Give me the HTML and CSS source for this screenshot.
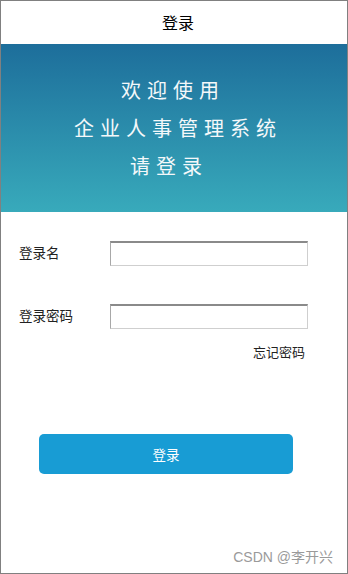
FILE: index.html
```html
<!DOCTYPE html>
<html lang="zh">
<head>
<meta charset="utf-8">
<title>登录</title>
<link rel="stylesheet" href="styles.css">
</head>
<body>
<div class="frame">
  <div class="header">登录</div>
  <div class="banner">
    <div class="line line-welcome">欢迎使用</div>
    <div class="line line-title">企业人事管理系统</div>
    <div class="line line-login">请登录</div>
  </div>
  <div class="form">
    <div class="row">
      <label class="label">登录名</label>
      <input class="input" type="text">
    </div>
    <div class="row row2">
      <label class="label">登录密码</label>
      <input class="input" type="password">
    </div>
    <div class="forget">忘记密码</div>
    <div class="btn-wrap"><button class="btn">登录</button></div>
  </div>
  <div class="watermark">CSDN @李开兴</div>
</div>
</body>
</html>
```

FILE: styles.css
```css
html, body {
  margin: 0;
  padding: 0;
  background: #fff;
}
body {
  font-family: "Liberation Sans", "Noto Sans CJK SC", sans-serif;
  color: #111;
}
.frame {
  width: 348px;
  height: 574px;
  box-sizing: border-box;
  border: 1px solid #808080;
  display: flex;
  flex-direction: column;
  overflow: hidden;
}
.header {
  height: 43px;
  line-height: 46px;
  text-align: center;
  padding-left: 8px;
  font-size: 16px;
  color: #000;
}
.banner {
  margin: 0 -1px;
  height: 168px;
  box-sizing: border-box;
  padding-top: 28px;
  background: linear-gradient(to bottom, #1d6e9b, #38aabb);
  color: #f4f8fa;
  text-align: center;
}
.line {
  height: 38px;
  line-height: 38px;
  font-size: 20px;
  letter-spacing: 6px;
}
.line-welcome {
  padding-right: 2px;
}
.line-title {
  padding-left: 8px;
}
.line-login {
  padding-right: 10px;
}
.form {
  padding: 29px 0 0 18px;
  display: flex;
  flex-direction: column;
}
.row {
  display: flex;
  align-items: center;
  height: 25px;
}
.row2 {
  margin-top: 38px;
}
.label {
  width: 91px;
  font-size: 13.5px;
  color: #222;
  margin-top: -3px;
}
.input {
  width: 198px;
  height: 25px;
  box-sizing: border-box;
  margin: 0;
  padding: 0;
  border: 1px solid #cfcfcf;
  border-top: 2px solid #8a8a8a;
  border-left: 1px solid #a8a8a8;
  background: #fff;
}
.forget {
  align-self: flex-end;
  margin: 13px 42px 0 0;
  font-size: 13px;
  color: #222;
}
.btn-wrap {
  margin-top: 73px;
  padding-left: 20px;
}
.btn {
  width: 254px;
  height: 40px;
  border: none;
  border-radius: 5px;
  background: #189cd4;
  color: #fff;
  font-family: "Liberation Sans", "Noto Sans CJK SC", sans-serif;
  font-size: 13.5px;
  padding: 0;
}
.watermark {
  margin-top: auto;
  align-self: flex-end;
  margin-right: 14px;
  margin-bottom: 7px;
  font-size: 14px;
  color: #9a9a9a;
}
```
